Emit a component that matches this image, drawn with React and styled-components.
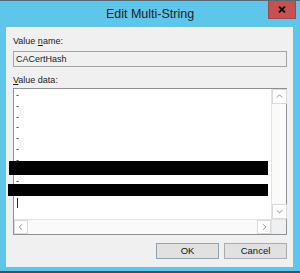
import React from "react";
import styled, { createGlobalStyle } from "styled-components";

const Global = createGlobalStyle`
  html, body { margin: 0; padding: 0; background: #5ec6ea; }
  body { font-family: "Liberation Sans", Arial, sans-serif; }
`;

const Window = styled.div`
  width: 300px;
  height: 273px;
  box-sizing: border-box;
  background: #5ec6ea;
  border-top: 1px solid #5a6a72;
  border-bottom: 2px solid #35566a;
  display: flex;
  flex-direction: column;
`;

const TitleBar = styled.div`
  height: 26px;
  display: grid;
  grid-template-columns: 1fr auto 1fr;
  align-items: start;
`;

const Title = styled.div`
  grid-column: 2;
  font-size: 12.5px;
  line-height: 16px;
  margin-top: 5px;
  color: #1c1c1c;
`;

const CloseButton = styled.div`
  grid-column: 3;
  justify-self: end;
  margin-right: 4px;
  width: 28px;
  height: 18px;
  background: #c75050;
  border: 1px solid #a84444;
  border-top: none;
  box-sizing: border-box;
  display: flex;
  align-items: center;
  justify-content: center;
`;

const Client = styled.div`
  position: relative;
  margin: 0 7px 0 6px;
  height: 240px;
  background: #f0f0f0;
  box-sizing: border-box;
  padding: 9px 6px 0 7px;
  display: flex;
  flex-direction: column;
`;

const Label = styled.div`
  font-size: 9px;
  line-height: 11px;
  color: #1a1a1a;
  height: ${(p) => p.$h || 11}px;
  margin-top: ${(p) => p.$mt || 0}px;
  u { text-decoration: underline; text-underline-offset: 1px; }
`;

const NameBox = styled.div`
  margin-top: 3px;
  height: 16px;
  box-sizing: border-box;
  border: 1px solid #a3a3a3;
  background: #f0f0f0;
  font-size: 9px;
  line-height: 14px;
  padding-left: 2px;
  color: #1a1a1a;
`;

const DataBox = styled.div`
  margin-top: 2px;
  height: 147px;
  box-sizing: border-box;
  border: 1px solid #8c9198;
  background: #fff;
  display: grid;
  grid-template-columns: 1fr 15px;
  grid-template-rows: 1fr 15px;
`;

const TextArea = styled.div`
  padding: 1px 0 0 2px;
  font-size: 9px;
  line-height: 10.8px;
  color: #222;
  overflow: hidden;
`;

const Line = styled.div`
  height: 10.8px;
  white-space: pre;
`;

const Caret = styled.span`
  display: inline-block;
  width: 1px;
  height: 10px;
  background: #222;
  margin-left: 1px;
  vertical-align: -1px;
`;

const VScroll = styled.div`
  background: #fafafa;
  border-left: 1px solid #e2e2e2;
  display: flex;
  flex-direction: column;
  justify-content: space-between;
`;

const HScroll = styled.div`
  background: #fafafa;
  border-top: 1px solid #e2e2e2;
  display: flex;
  justify-content: space-between;
`;

const ArrowBtn = styled.div`
  width: ${(p) => (p.$h ? 14 : 15)}px;
  height: ${(p) => (p.$h ? 14 : 15)}px;
  box-sizing: border-box;
  border: 1px solid #dadada;
  background: #fdfdfd;
  display: flex;
  align-items: center;
  justify-content: center;
`;

const Corner = styled.div`
  background: #f0f0f0;
  border-top: 1px solid #e2e2e2;
  border-left: 1px solid #e2e2e2;
`;

const Redaction = styled.div`
  position: absolute;
  background: #000;
  left: ${(p) => p.$l}px;
  top: ${(p) => p.$t}px;
  width: ${(p) => p.$w}px;
  height: ${(p) => p.$hh}px;
`;

const ButtonRow = styled.div`
  margin-top: 8px;
  display: flex;
  justify-content: flex-end;
  gap: 5px;
`;

const Button = styled.div`
  width: 63px;
  height: 16px;
  box-sizing: border-box;
  background: #e1e1e1;
  border: 1px solid ${(p) => (p.$default ? "#8ea2b6" : "#adadad")};
  font-size: 9.5px;
  line-height: 14px;
  text-align: center;
  color: #111;
`;

const Chevron = ({ dir }) => {
  const paths = {
    up: "M1.5 5 L4.5 2 L7.5 5",
    down: "M1.5 2.5 L4.5 5.5 L7.5 2.5",
    left: "M5 1.5 L2 4.5 L5 7.5",
    right: "M3 1.5 L6 4.5 L3 7.5",
  };
  return (
    <svg width="9" height="8" viewBox="0 0 9 9">
      <path d={paths[dir]} fill="none" stroke="#8a8a8a" strokeWidth="1.1" />
    </svg>
  );
};

export default function App() {
  const lines = ["-", "-", "-", "-", "-", "-", "-", "", "-", ""];
  return (
    <>
      <Global />
      <Window>
        <TitleBar>
          <Title>Edit Multi-String</Title>
          <CloseButton>
            <svg width="8" height="7" viewBox="0 0 8 7">
              <path d="M1 0.5 L7 6.5 M7 0.5 L1 6.5" stroke="#111" strokeWidth="1.8" />
            </svg>
          </CloseButton>
        </TitleBar>
        <Client>
          <Label $h={12}>
            Value <u>n</u>ame:
          </Label>
          <NameBox>CACertHash</NameBox>
          <Label $mt={8}>
            <u>V</u>alue data:
          </Label>
          <DataBox>
            <TextArea>
              {lines.map((l, i) => (
                <Line key={i}>{l}</Line>
              ))}
              <Line>
                <Caret />
              </Line>
            </TextArea>
            <VScroll>
              <ArrowBtn>
                <Chevron dir="up" />
              </ArrowBtn>
              <ArrowBtn>
                <Chevron dir="down" />
              </ArrowBtn>
            </VScroll>
            <HScroll>
              <ArrowBtn $h>
                <Chevron dir="left" />
              </ArrowBtn>
              <ArrowBtn $h>
                <Chevron dir="right" />
              </ArrowBtn>
            </HScroll>
            <Corner />
          </DataBox>
          <ButtonRow>
            <Button $default>OK</Button>
            <Button>Cancel</Button>
          </ButtonRow>
          <Redaction $l={3} $t={134} $w={259} $hh={14} />
          <Redaction $l={2} $t={157} $w={260} $hh={12} />
        </Client>
      </Window>
    </>
  );
}
